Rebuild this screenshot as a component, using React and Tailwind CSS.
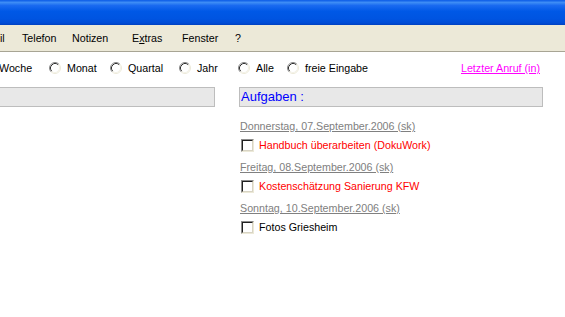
import React from "react"

const menu = [
  { label: "il", w: "w-[22px]" },
  { label: "Telefon", w: "w-[50px]" },
  { label: "Notizen", w: "w-[60px]" },
  { label: "Extras", w: "w-[50px]" },
  { label: "Fenster", w: "w-[53px]" },
  { label: "?", w: "w-[20px]" },
]

const periods = [
  { label: "Monat", w: "w-[61px]" },
  { label: "Quartal", w: "w-[69px]" },
  { label: "Jahr", w: "w-[59px]" },
  { label: "Alle", w: "w-[49px]" },
  { label: "freie Eingabe", w: "w-[100px]" },
]

const tasks = [
  { date: "Donnerstag, 07.September.2006 (sk)", text: "Handbuch überarbeiten (DokuWork)", red: true },
  { date: "Freitag, 08.September.2006 (sk)", text: "Kostenschätzung Sanierung KFW", red: true },
  { date: "Sonntag, 10.September.2006 (sk)", text: "Fotos Griesheim", red: false },
]

function Radio() {
  return (
    <svg width="12" height="12" viewBox="0 0 12 12" className="shrink-0">
      <circle cx="6" cy="6" r="5.5" fill="#fff" />
      <path d="M9.89 2.11 A5.5 5.5 0 0 0 2.11 9.89" stroke="#8a8a8a" fill="none" />
      <path d="M2.11 9.89 A5.5 5.5 0 0 0 9.89 2.11" stroke="#ece9d8" fill="none" />
      <path d="M9.18 2.82 A4.5 4.5 0 0 0 2.82 9.18" stroke="#303030" fill="none" />
      <path d="M2.82 9.18 A4.5 4.5 0 0 0 9.18 2.82" stroke="#f4f2e8" fill="none" />
    </svg>
  )
}

function Checkbox() {
  return (
    <div className="w-[13px] h-[13px] shrink-0 border border-t-[#8c8c8c] border-l-[#8c8c8c] border-b-[#ece9d8] border-r-[#ece9d8]">
      <div className="w-full h-full border border-t-[#202020] border-l-[#202020] border-b-[#d8d4c4] border-r-[#d8d4c4] bg-white" />
    </div>
  )
}

export default function App() {
  return (
    <div className="w-[565px] h-[317px] overflow-hidden bg-white font-['Liberation_Sans',Arial,sans-serif] text-[10.7px] text-black">
      <div className="h-[25px] bg-[linear-gradient(to_bottom,#0a5ae6_0%,#3d8cf5_10%,#1a6af0_22%,#0058e6_45%,#0054e1_75%,#004cd6_92%,#0040c0_100%)]" />

      <div className="h-[27px] pt-[1px] bg-[#ece9d8] border-b border-b-[#a8a594] flex items-center">
        {menu.map(m => (
          <span key={m.label} className={`${m.w} shrink-0`}>
            {m.label === "Extras" ? <>E<span className="underline">x</span>tras</> : m.label}
          </span>
        ))}
      </div>

      <div className="h-[20px] mt-[6px] flex items-center">
        <span className="w-[50px] -ml-[1px]">Woche</span>
        {periods.map(p => (
          <div key={p.label} className={`${p.w} flex items-center gap-[6px]`}>
            <Radio />
            <span>{p.label}</span>
          </div>
        ))}
        <a className="ml-auto mr-[25px] text-[#ff00ff] underline">Letzter Anruf (in)</a>
      </div>

      <div className="flex mt-[9px]">
        <div className="w-[221px] -ml-[6px] h-[20px] bg-[#e8e8e8] border border-[#bdbdbd]" />
        <div className="ml-[24px] w-[304px]">
          <div className="h-[20px] bg-[#e8e8e8] border border-[#bdbdbd] flex items-center pl-[1px] text-[13px] text-[#0000ff]">
            Aufgaben :
          </div>
          <div className="mt-[12px] pl-[1px]">
            {tasks.map((t, i) => (
              <div key={i} className={i > 0 ? "mt-[6px]" : ""}>
                <div className="h-[14px] leading-[14px] text-[#808080] underline">{t.date}</div>
                <div className="h-[18px] mt-[3px] flex items-center gap-[5px] pl-[1px]">
                  <Checkbox />
                  <span className={t.red ? "text-[#ff0000]" : "text-black"}>{t.text}</span>
                </div>
              </div>
            ))}
          </div>
        </div>
      </div>
    </div>
  )
}
